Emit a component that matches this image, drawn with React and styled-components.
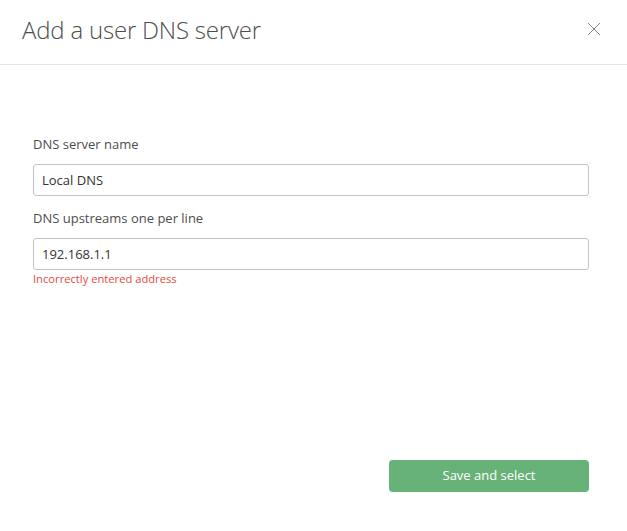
import React from 'react';
import styled, { createGlobalStyle } from 'styled-components';

const GlobalStyle = createGlobalStyle`
  html, body {
    margin: 0;
    padding: 0;
    background: #fff;
  }
  body {
    font-family: 'Open Sans', 'Noto Sans', sans-serif;
    color: #333;
  }
  * {
    box-sizing: border-box;
  }
`;

const Modal = styled.div`
  width: 627px;
  height: 531px;
  display: flex;
  flex-direction: column;
  background: #fff;
`;

const Header = styled.div`
  height: 65px;
  display: flex;
  align-items: center;
  justify-content: space-between;
  padding: 0 26px 6px 22px;
  border-bottom: 1px solid #e5e5e5;
`;

const Title = styled.h2`
  margin: 0;
  font-size: 24px;
  font-weight: 300;
  color: #4d4d4d;
  letter-spacing: -0.2px;
`;

const CloseButton = styled.button`
  border: 0;
  background: none;
  padding: 0;
  width: 14px;
  height: 14px;
  display: flex;
  cursor: pointer;
  color: #888;
`;

const Body = styled.div`
  flex: 1;
  display: flex;
  flex-direction: column;
  padding: 70px 38px 0 33px;
`;

const Field = styled.div`
  display: flex;
  flex-direction: column;
  margin-bottom: ${props => (props.$last ? '0' : '13px')};
`;

const Label = styled.label`
  font-size: 13px;
  color: #4d4d4d;
  line-height: 18px;
  margin-bottom: 11px;
`;

const Input = styled.input`
  height: 32px;
  width: 100%;
  border: 1px solid #c4c4c4;
  border-radius: 3px;
  padding: 0 8px;
  font-family: inherit;
  font-size: 13px;
  color: #333;
  outline: none;
`;

const ErrorText = styled.div`
  font-size: 11.2px;
  color: #e24b3b;
  margin-top: 1px;
`;

const Footer = styled.div`
  display: flex;
  justify-content: flex-end;
  padding: 0 38px 39px 33px;
`;

const PrimaryButton = styled.button`
  width: 200px;
  height: 32px;
  border: 0;
  border-radius: 4px;
  background: #67b279;
  color: #fff;
  font-family: inherit;
  font-size: 13px;
  line-height: 30px;
  padding: 0 0 2px;
  cursor: pointer;
`;

const App = () => {
  return (
    <>
      <GlobalStyle />
      <Modal>
        <Header>
          <Title>Add a user DNS server</Title>
          <CloseButton aria-label="Close">
            <svg width="14" height="14" viewBox="0 0 14 14">
              <path d="M1 1 L13 13 M13 1 L1 13" stroke="currentColor" strokeWidth="1" />
            </svg>
          </CloseButton>
        </Header>
        <Body>
          <Field>
            <Label>DNS server name</Label>
            <Input defaultValue="Local DNS" />
          </Field>
          <Field $last>
            <Label>DNS upstreams one per line</Label>
            <Input defaultValue="192.168.1.1" />
            <ErrorText>Incorrectly entered address</ErrorText>
          </Field>
        </Body>
        <Footer>
          <PrimaryButton>Save and select</PrimaryButton>
        </Footer>
      </Modal>
    </>
  );
};

export default App;
